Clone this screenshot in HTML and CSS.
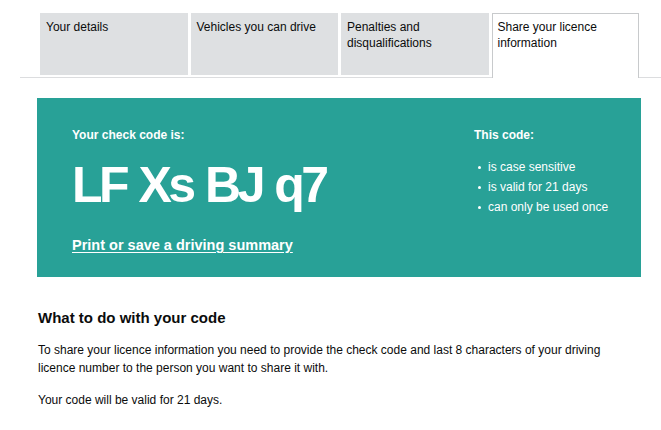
FILE: index.html
```html
<!DOCTYPE html>
<html lang="en">
<head>
<meta charset="utf-8">
<title>Share your licence information</title>
<link rel="stylesheet" href="styles.css">
</head>
<body>
<nav class="tabs">
  <a class="tab">Your details</a>
  <a class="tab">Vehicles you can drive</a>
  <a class="tab">Penalties and disqualifications</a>
  <a class="tab tab-selected">Share your licence information</a>
</nav>
<main class="main">
  <section class="panel">
    <div class="panel-left">
      <h2 class="panel-label">Your check code is:</h2>
      <p class="code">LF Xs BJ q7</p>
      <a class="summary-link" href="#">Print or save a driving summary</a>
    </div>
    <div class="panel-right">
      <h2 class="panel-label">This code:</h2>
      <ul class="facts">
        <li>is case sensitive</li>
        <li>is valid for 21 days</li>
        <li>can only be used once</li>
      </ul>
    </div>
  </section>
  <h2 class="heading">What to do with your code</h2>
  <p class="body-text">To share your licence information you need to provide the check code and last 8 characters of your driving licence number to the person you want to share it with.</p>
  <p class="body-text">Your code will be valid for 21 days.</p>
</main>
</body>
</html>
```
FILE: styles.css
```css
* { box-sizing: border-box; }

body {
  margin: 0;
  font-family: "Liberation Sans", Arial, sans-serif;
  color: #0b0c0c;
  background: #ffffff;
}

.tabs {
  display: flex;
  align-items: flex-end;
  gap: 3px;
  margin: 0 0 0 20px;
  padding: 13px 0 0 20px;
  border-bottom: 1px solid #dcdddf;
}

.tab {
  flex: 0 0 147.5px;
  height: 62px;
  margin-bottom: 2px;
  padding: 6px 6px 0;
  background: #dee0e2;
  font-size: 12px;
  line-height: 16px;
  color: #0b0c0c;
}

.tab-selected {
  height: 65px;
  margin-bottom: -1px;
  padding: 5px 5px 0;
  background: #ffffff;
  border: 1px solid #c8cacc;
  border-bottom: 0;
}

.main {
  width: 604px;
  margin: 20px 0 0 37px;
}

.panel {
  display: grid;
  grid-template-columns: 402px 1fr;
  padding: 29px 0 22px 35px;
  background: #28a197;
  color: #ffffff;
}

.panel-label {
  margin: 0;
  font-size: 12px;
  line-height: 16px;
  font-weight: 700;
}

.code {
  margin: 17px 0 0;
  font-size: 50px;
  line-height: 50px;
  font-weight: 700;
  letter-spacing: -3.5px;
  word-spacing: 2px;
}

.summary-link {
  display: inline-block;
  margin-top: 25px;
  font-size: 14.5px;
  line-height: 20px;
  font-weight: 700;
  color: #ffffff;
  text-decoration: underline;
  text-underline-offset: 2px;
}

.facts {
  list-style: none;
  margin: 14px 0 0;
  padding: 0;
  font-size: 12px;
  line-height: 20px;
}

.facts li {
  padding-left: 4px;
}

.facts li::before {
  content: "";
  display: inline-block;
  width: 3px;
  height: 3px;
  margin-right: 7px;
  border-radius: 50%;
  background: #ffffff;
  vertical-align: middle;
}

.heading {
  margin: 31px 0 0 1px;
  font-size: 15px;
  line-height: 20px;
  font-weight: 700;
}

.body-text {
  max-width: 590px;
  margin: 14px 0 0 1px;
  font-size: 12px;
  line-height: 17.5px;
}

.body-text + .body-text {
  margin-top: 14.5px;
}
```
